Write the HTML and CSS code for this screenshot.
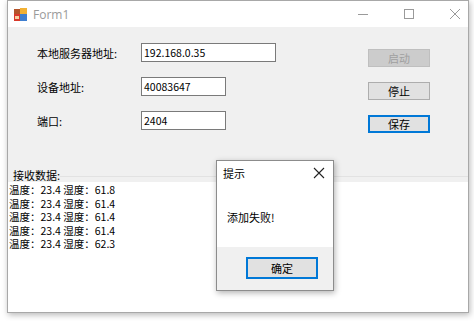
FILE: index.html
```html
<!DOCTYPE html>
<html lang="zh">
<head>
<meta charset="utf-8">
<link rel="stylesheet" href="styles.css">
</head>
<body>
<div class="window">
  <div class="titlebar">
    <svg class="appicon" width="13" height="13" viewBox="0 0 13 13">
      <rect x="0" y="1" width="6" height="5" fill="#b3542a"/>
      <rect x="6" y="0" width="7" height="6" fill="#f2b134"/>
      <rect x="0" y="6" width="6" height="7" fill="#d8392b"/>
      <rect x="6" y="6" width="7" height="7" fill="#3f7fd0"/>
      <rect x="1" y="8" width="4" height="3" fill="#f6d2a0"/>
    </svg>
    <span class="title">Form1</span>
    <div class="caption-btns">
      <svg class="cbtn" width="46" height="26" viewBox="0 0 46 26"><line x1="18" y1="13.5" x2="28" y2="13.5" stroke="#9a9a9a" stroke-width="1"/></svg>
      <svg class="cbtn" width="46" height="26" viewBox="0 0 46 26"><rect x="18.5" y="8.5" width="9" height="9" fill="none" stroke="#9a9a9a" stroke-width="1"/></svg>
      <svg class="cbtn" width="46" height="26" viewBox="0 0 46 26"><path d="M18 8 L28 18 M28 8 L18 18" stroke="#9a9a9a" stroke-width="1"/></svg>
    </div>
  </div>
  <div class="client">
    <div class="top">
      <div class="form">
        <div class="row"><span class="label">本地服务器地址:</span><div class="input wide">192.168.0.35</div></div>
        <div class="row"><span class="label">设备地址:</span><div class="input">40083647</div></div>
        <div class="row"><span class="label">端口:</span><div class="input">2404</div></div>
      </div>
      <div class="buttons">
        <div class="btn disabled">启动</div>
        <div class="btn">停止</div>
        <div class="btn focused">保存</div>
      </div>
    </div>
    <div class="recv-head"><span class="recv-label">接收数据:</span><span class="recv-line"></span></div>
    <div class="recv-box">
      <div class="line">温度：23.4 湿度：61.8</div>
      <div class="line">温度：23.4 湿度：61.4</div>
      <div class="line">温度：23.4 湿度：61.4</div>
      <div class="line">温度：23.4 湿度：61.4</div>
      <div class="line">温度：23.4 湿度：62.3</div>
    </div>
  </div>
</div>
<div class="dialog">
  <div class="dlg-top">
    <div class="dlg-title"><span>提示</span>
      <svg width="12" height="12" viewBox="0 0 12 12"><path d="M1 1 L11 11 M11 1 L1 11" stroke="#222" stroke-width="1.1"/></svg>
    </div>
    <div class="dlg-msg">添加失败!</div>
  </div>
  <div class="dlg-foot"><div class="dlg-btn">确定</div></div>
</div>
</body>
</html>
```

FILE: styles.css
```css
html, body {
  margin: 0;
  padding: 0;
  background: #ffffff;
}
body {
  position: relative;
  width: 474px;
  height: 321px;
  overflow: hidden;
  font-family: "Noto Sans CJK SC", "Noto Sans", sans-serif;
  font-size: 11px;
  color: #000;
}
.window {
  margin-left: 7px;
  width: 460px;
  height: 311px;
  border: 1px solid #a8a8a8;
  display: flex;
  flex-direction: column;
  box-shadow: 1px 2px 6px rgba(0, 0, 0, 0.28);
}
.titlebar {
  height: 26px;
  background: #ffffff;
  display: flex;
  align-items: center;
  flex-shrink: 0;
}
.appicon {
  margin-left: 6px;
  margin-right: 6px;
}
.title {
  font-family: "Open Sans", "Noto Sans", sans-serif;
  font-size: 12px;
  color: #9a9a9a;
}
.caption-btns {
  margin-left: auto;
  display: flex;
  margin-right: -10px;
}
.client {
  flex: 1;
  background: #f0f0f0;
  display: flex;
  flex-direction: column;
}
.top {
  display: flex;
  height: 142px;
  flex-shrink: 0;
}
.form {
  padding: 16px 0 0 29px;
  display: flex;
  flex-direction: column;
  gap: 15px;
}
.row {
  display: flex;
  align-items: center;
  height: 19px;
}
.label {
  width: 104px;
  font-size: 11px;
}
.input {
  box-sizing: border-box;
  width: 85px;
  height: 19px;
  background: #fff;
  border: 1px solid #7a7a7a;
  padding: 0 2px;
  line-height: 17px;
  font-size: 10.5px;
}
.input.wide {
  width: 135px;
}
.buttons {
  margin-left: auto;
  margin-right: 38px;
  padding-top: 22px;
  display: flex;
  flex-direction: column;
  gap: 15px;
}
.btn {
  box-sizing: border-box;
  width: 62px;
  height: 18px;
  background: #e1e1e1;
  border: 1px solid #adadad;
  text-align: center;
  line-height: 16px;
  font-size: 11px;
}
.btn.disabled {
  background: #cccccc;
  border-color: #bfbfbf;
  color: #a0a0a0;
}
.btn.focused {
  border: 2px solid #0078d7;
  line-height: 14px;
}
.recv-head {
  height: 13px;
  display: flex;
  align-items: center;
  flex-shrink: 0;
}
.recv-label {
  padding-left: 5px;
  line-height: 13px;
}
.recv-line {
  flex: 1;
  height: 1px;
  margin-top: 2px;
  background: #e2e2e2;
}
.recv-box {
  flex: 1;
  background: #ffffff;
  padding: 1px 0 0 1px;
}
.line {
  height: 13.5px;
  line-height: 13.5px;
  font-size: 10.5px;
  white-space: nowrap;
}
.dialog {
  position: absolute;
  left: 216px;
  top: 160px;
  width: 116px;
  height: 129px;
  border: 1px solid #8c8c8c;
  display: flex;
  flex-direction: column;
  box-shadow: 1px 2px 6px rgba(0, 0, 0, 0.3);
}
.dlg-top {
  background: #ffffff;
  height: 86px;
}
.dlg-title {
  display: flex;
  align-items: center;
  justify-content: space-between;
  height: 24px;
  padding: 0 8px 0 6px;
  font-size: 11px;
}
.dlg-msg {
  padding: 24px 0 0 10px;
  font-size: 11px;
}
.dlg-foot {
  flex: 1;
  background: #f0f0f0;
  display: flex;
  justify-content: flex-end;
  padding: 10px 15px 0 0;
}
.dlg-btn {
  box-sizing: border-box;
  width: 72px;
  height: 22px;
  background: #e1e1e1;
  border: 2px solid #0078d7;
  text-align: center;
  line-height: 18px;
  font-size: 11px;
}
```
